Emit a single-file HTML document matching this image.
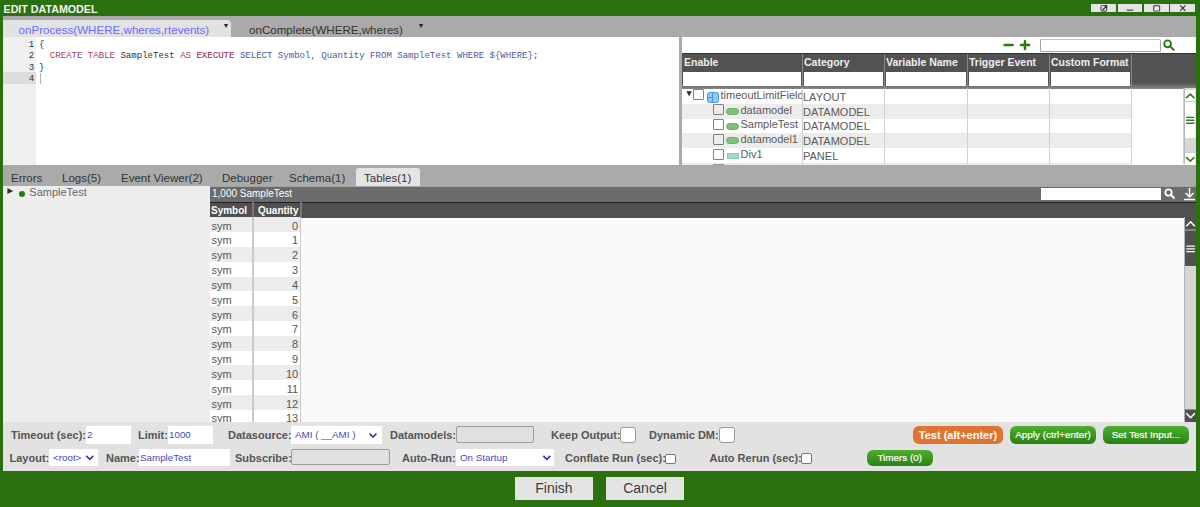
<!DOCTYPE html>
<html><head><meta charset="utf-8">
<style>
*{box-sizing:border-box;margin:0;padding:0}
html,body{width:1200px;height:507px;overflow:hidden;background:#2b700f;font-family:"Liberation Sans",sans-serif}
.a{position:absolute}
.t{position:absolute;white-space:nowrap;line-height:1}
#title{left:3.5px;top:3.6px;color:#f4f4f4;font-weight:bold;font-size:10.7px}
.wb{position:absolute;top:4px;width:24px;height:8px;background:#e4e4e4}
/* top tab bar */
#tabbar{left:3px;top:16px;width:1193px;height:21px;background:#aaaaaa}
#tab1{left:3px;top:20px;width:228px;height:17px;background:#e2e2e2;border-top-right-radius:4px}
/* editor */
#editor{left:3px;top:37px;width:676px;height:128px;background:#fff}
#gutter{left:3px;top:37px;width:33px;height:128px;background:#f0f0f0}
.ln{position:absolute;width:33px;text-align:right;padding-right:2px;font-family:"Liberation Mono",monospace;font-size:9.9px;color:#333;line-height:11.5px;transform:scaleX(0.9158);transform-origin:100% 0}
.code{position:absolute;left:39.2px;font-family:"Liberation Mono",monospace;font-size:9.9px;line-height:11.5px;white-space:pre;color:#333;transform:scaleX(0.9158);transform-origin:0 0}
.kw{color:#a0406a}.kb{color:#9a3060;-webkit-text-stroke:0.12px #9a3060}.id{color:#4a5aa0}
#divider{left:679px;top:37px;width:3px;height:128px;background:#aaaaaa}
/* right panel */
#rp{left:682px;top:37px;width:514px;height:128px;background:#fff}
#hdr{left:682px;top:53px;width:514px;height:36px;background:linear-gradient(#333 0,#333 1.5px,#525252 1.5px,#525252 30px,#8a8a8a 36px)}
.hc{position:absolute;top:53px;height:19px;color:#eee;font-weight:bold;font-size:10.5px;line-height:19px;padding-left:2px}
.hin{position:absolute;top:72px;height:14px;background:#fff}
.row{position:absolute;left:682px;width:502px;height:14.75px}
.ct{position:absolute;font-size:11px;color:#5a5a5a;line-height:1;white-space:nowrap}
.cb{position:absolute;width:11px;height:11px;border:1px solid #808080;background:transparent;border-radius:1px}
.pill{position:absolute;width:12.8px;height:7px;border-radius:3.5px;background:#7cc278;border:1px solid #66b262}
.vsep{position:absolute;width:1px;background:#cfcfcf}
/* bottom */
#btabbar{left:3px;top:165px;width:1193px;height:21px;background:#aaaaaa}
.bt{position:absolute;top:173.3px;font-size:11.5px;color:#333;line-height:1;white-space:nowrap}
#btab{left:356px;top:168px;width:64px;height:18px;background:#e4e4e4;border-radius:3px 3px 0 0}
#ltree{left:3px;top:186px;width:207px;height:236px;background:#eeeeee}
#tarea{left:210px;top:186px;width:986px;height:236px;background:linear-gradient(#a4a4a4 0,#a4a4a4 1px,#fafafa 1px)}
#ttitle{left:210px;top:187px;width:986px;height:15px;background:#6b6b6b}
#thdr{left:210px;top:202px;width:986px;height:16px;background:#505050;border-top:1px solid #222}
.drow{position:absolute;left:210px;width:90px;height:14.8px;font-size:11px;color:#555}
#form{left:3px;top:422px;width:1193px;height:49px;background:#e2e2e2}
.lbl{position:absolute;font-weight:bold;font-size:11px;color:#555;line-height:1;white-space:nowrap}
.inp{position:absolute;background:#fff;height:18px}
.val{position:absolute;font-size:9.8px;color:#4848b8;line-height:1;white-space:nowrap}
.btn{position:absolute;border-radius:6px;color:#fff;font-size:9.9px;line-height:1;text-align:center;white-space:nowrap}
.gbtn{background:linear-gradient(#4db02c,#2a8014);-webkit-text-stroke:0.2px #fff}
.fbtn{position:absolute;top:477.3px;width:78px;height:23px;background:#e4e4e4;color:#3c3c3c;font-size:14px;text-align:center;line-height:23px}
</style></head><body>
<div class="t" id="title">EDIT DATAMODEL</div>
<div class="wb" style="left:1091px;width:25px"></div>
<div class="wb" style="left:1118px"></div>
<div class="wb" style="left:1144px;width:25px"></div>
<div class="wb" style="left:1170px;width:25px"></div>
<svg class="a" style="left:1088px;top:0" width="112" height="16" viewBox="0 0 112 16">
<rect x="13" y="5.5" width="5.6" height="5.6" rx="1.3" fill="none" stroke="#5a5a5a" stroke-width="1.2"/>
<path d="M15.6 4.9h3.6v3.6Z" fill="#333"/>
<path d="M14.6 10l3.8-3.8" fill="none" stroke="#333" stroke-width="1.3"/>
<path d="M38.8 10.2h6.6" stroke="#444" stroke-width="1.2"/>
<rect x="65.6" y="5.6" width="6" height="5.4" rx="1" fill="none" stroke="#555" stroke-width="1.2"/>
<path d="M92.2 5.4l5.2 5.4M97.4 5.4l-5.2 5.4" stroke="#333" stroke-width="1.2"/>
</svg>

<div class="a" id="tabbar"></div>
<div class="a" id="tab1"></div>
<div class="t" style="left:18.5px;top:24px;font-size:11.6px;color:#6a6aff">onProcess(WHERE,wheres,rtevents)</div>
<div class="t" style="left:222.5px;top:22px;font-size:7px;color:#222">&#9660;</div>
<div class="t" style="left:249px;top:24px;font-size:11.6px;color:#333">onComplete(WHERE,wheres)</div>
<div class="t" style="left:417.5px;top:22px;font-size:7px;color:#222">&#9660;</div>

<div class="a" id="editor"></div>
<div class="a" id="gutter"></div>
<div class="a" style="left:3px;top:72px;width:33px;height:11.5px;background:#dcdcdc"></div>
<div class="ln" style="left:3px;top:38.5px">1</div>
<div class="ln" style="left:3px;top:50px">2</div>
<div class="ln" style="left:3px;top:61.5px">3</div>
<div class="ln" style="left:3px;top:73px">4</div>
<div class="code" style="top:38.5px">{</div>
<div class="code" style="top:50px">  <span class="kw">CREATE</span> <span class="kw">TABLE</span> SampleTest <span class="kw">AS</span> <span class="kb">EXECUTE</span> <span class="id">SELECT Symbol, Quantity FROM SampleTest WHERE ${WHERE}</span>;</div>
<div class="code" style="top:61.5px">}</div>
<div class="a" style="left:40px;top:73px;width:1px;height:10.5px;background:#b0b0b0"></div>

<div class="a" id="divider"></div>
<div class="a" id="rp"></div>

<!-- right panel -->
<svg class="a" style="left:990px;top:34px" width="50" height="22" viewBox="0 0 50 22"><path d="M14.6 11h8M31 11h8.2M35 7.4v7.6" fill="none" stroke="#2a7a12" stroke-width="2.6" stroke-linecap="round"/></svg>
<div class="a" style="left:1039.7px;top:39px;width:121.5px;height:12.7px;background:#fff;border:1px solid;border-color:#c4c4c4 #a4a4a4 #a4a4a4 #a4a4a4;border-radius:1.5px"></div>
<svg class="a" style="left:1160px;top:36px" width="20" height="20" viewBox="0 0 20 20"><circle cx="7.6" cy="7.8" r="3.4" fill="none" stroke="#2a7a12" stroke-width="1.9"/><line x1="10.2" y1="10.4" x2="13.6" y2="13.8" stroke="#2a7a12" stroke-width="2" stroke-linecap="round"/></svg>
<div class="a" id="hdr"></div>

<div class="hc" style="left:682px">Enable</div>
<div class="hc" style="left:802px">Category</div>
<div class="hc" style="left:884px">Variable Name</div>
<div class="hc" style="left:967px">Trigger Event</div>
<div class="hc" style="left:1049px">Custom Format</div>
<div class="a" style="left:802px;top:54px;width:1px;height:34px;background:#888"></div>
<div class="a" style="left:884px;top:54px;width:1px;height:34px;background:#888"></div>
<div class="a" style="left:967px;top:54px;width:1px;height:34px;background:#888"></div>
<div class="a" style="left:1049px;top:54px;width:1px;height:34px;background:#888"></div>
<div class="a" style="left:1131px;top:54px;width:1px;height:34px;background:#888"></div>
<div class="hin" style="left:683px;width:118px"></div>
<div class="hin" style="left:804px;width:79px"></div>
<div class="hin" style="left:886px;width:80px"></div>
<div class="hin" style="left:969px;width:79px"></div>
<div class="hin" style="left:1051px;width:79px"></div>
<div class="a" style="left:682px;top:89px;width:502px;height:75px;background:#fff"></div>
<div class="a" style="left:682px;top:104px;width:449px;height:14.5px;background:#ececec"></div>
<div class="a" style="left:682px;top:133px;width:449px;height:15px;background:#ececec"></div>
<div class="a" style="left:682px;top:163px;width:449px;height:2px;background:#ececec"></div>
<div class="a" style="left:713px;top:164px;width:11px;height:1px;background:#999"></div>
<div class="vsep" style="left:802px;top:88px;height:76px"></div>
<div class="vsep" style="left:884px;top:88px;height:76px"></div>
<div class="vsep" style="left:967px;top:88px;height:76px"></div>
<div class="vsep" style="left:1049px;top:88px;height:76px"></div>
<div class="vsep" style="left:1131px;top:88px;height:76px"></div>
<svg class="a" style="left:680px;top:86px" width="20" height="20"><path d="M6.4 5.3h5.4l-2.7 5Z" fill="#2a2a2a"/></svg>
<div class="cb" style="left:693px;top:89.4px"></div>
<div class="a" style="left:706.5px;top:91.5px;width:12.5px;height:11px;border-radius:2.5px;background:#8ccaf2;border:1px solid #4a94e0"></div><div class="a" style="left:712.2px;top:92px;width:1px;height:10px;background:#4a94e0"></div><div class="a" style="left:707px;top:96.5px;width:5.5px;height:1px;background:#4a94e0"></div>
<div class="ct" style="left:720.5px;top:90.3px;width:81.5px;overflow:hidden">timeoutLimitField</div>
<div class="cb" style="left:713px;top:104.3px"></div><div class="pill" style="left:726.2px;top:107.8px"></div>
<div class="ct" style="left:740.5px;top:104.6px">datamodel</div>
<div class="cb" style="left:713px;top:119px"></div><div class="pill" style="left:726.2px;top:122.5px"></div>
<div class="ct" style="left:740.5px;top:119.3px">SampleTest</div>
<div class="cb" style="left:713px;top:133.8px"></div><div class="pill" style="left:726.2px;top:137.3px"></div>
<div class="ct" style="left:740.5px;top:134px">datamodel1</div>
<div class="cb" style="left:713px;top:148.5px"></div><div class="a" style="left:726.5px;top:152.7px;width:12.5px;height:6.8px;background:#a6d6c6;border:1px solid #92c8b6"></div>
<div class="ct" style="left:740.5px;top:148.8px">Div1</div>
<div class="ct" style="left:803px;top:92px">LAYOUT</div>
<div class="ct" style="left:803px;top:106.5px">DATAMODEL</div>
<div class="ct" style="left:803px;top:121px">DATAMODEL</div>
<div class="ct" style="left:803px;top:135.7px">DATAMODEL</div>
<div class="ct" style="left:803px;top:150.5px">PANEL</div>
<!-- tree scrollbar -->
<svg class="a" style="left:0;top:0" width="1200" height="170" viewBox="0 0 1200 170">
<rect x="1183.5" y="88" width="12.5" height="76" fill="#d8d8d8"/>
<rect x="1183.5" y="88" width="1.5" height="76" fill="#b8b8b8"/>
<rect x="1185" y="90" width="10.5" height="11.2" fill="#fff"/>
<rect x="1185" y="102" width="10.5" height="36" fill="#fff"/>
<rect x="1185" y="101.2" width="10.5" height="0.8" fill="#c8c8c8"/>
<rect x="1185" y="152.8" width="10.5" height="11.2" fill="#fff"/>
<rect x="1185" y="152" width="10.5" height="0.8" fill="#c8c8c8"/>
<path d="M1186 98.2L1190.2 94.2L1194.4 98.2" fill="none" stroke="#2e7d1a" stroke-width="1.6"/>
<path d="M1186 157.2L1190.2 161.2L1194.4 157.2" fill="none" stroke="#2e7d1a" stroke-width="1.6"/>
<path d="M1186 117.4h8.4M1186 120.3h8.4M1186 123.2h8.4" stroke="#2e7d1a" stroke-width="1.4"/>
</svg>
<!-- bottom tabs -->
<div class="a" id="btabbar"></div>
<div class="a" id="btab"></div>
<div class="bt" style="left:11px">Errors</div>
<div class="bt" style="left:62px">Logs(5)</div>
<div class="bt" style="left:121px">Event Viewer(2)</div>
<div class="bt" style="left:222px">Debugger</div>
<div class="bt" style="left:289px">Schema(1)</div>
<div class="bt" style="left:364px">Tables(1)</div>
<div class="a" id="ltree"></div>
<svg class="a" style="left:0;top:180px" width="20" height="20"><path d="M7.4 8.1L13.3 11L7.4 14Z" fill="#333"/></svg>
<div class="a" style="left:18.7px;top:190.7px;width:6.2px;height:6.2px;border-radius:50%;background:#2a7a12"></div>
<div class="ct" style="left:29.3px;top:187.3px;color:#666">SampleTest</div>
<div class="a" id="tarea"></div>
<div class="a" id="ttitle"></div>
<div class="t" style="left:212px;top:188.7px;font-size:10px;color:#fff">1,000 SampleTest</div>
<div class="a" id="thdr"></div>
<div class="t" style="left:211px;top:205.8px;font-size:10px;color:#fff;font-weight:bold">Symbol</div>
<div class="t" style="left:248px;top:205.8px;width:50.5px;text-align:right;font-size:10px;color:#fff;font-weight:bold">Quantity</div>
<div class="a" style="left:1041px;top:188px;width:120px;height:12px;background:#fff"></div>

<div class="a" style="left:210px;top:217.2px;width:974px;height:204.8px;overflow:hidden">
<div class="a" style="left:0;top:0.00px;width:90px;height:14.83px;background:#ececec"></div>
<div class="t" style="left:1.4px;top:3.40px;font-size:11px;color:#555">sym</div>
<div class="t" style="left:43px;top:3.40px;width:45.2px;text-align:right;font-size:11px;color:#555">0</div>
<div class="a" style="left:0;top:14.83px;width:90px;height:14.83px;background:#ffffff"></div>
<div class="t" style="left:1.4px;top:18.23px;font-size:11px;color:#555">sym</div>
<div class="t" style="left:43px;top:18.23px;width:45.2px;text-align:right;font-size:11px;color:#555">1</div>
<div class="a" style="left:0;top:29.66px;width:90px;height:14.83px;background:#ececec"></div>
<div class="t" style="left:1.4px;top:33.06px;font-size:11px;color:#555">sym</div>
<div class="t" style="left:43px;top:33.06px;width:45.2px;text-align:right;font-size:11px;color:#555">2</div>
<div class="a" style="left:0;top:44.49px;width:90px;height:14.83px;background:#ffffff"></div>
<div class="t" style="left:1.4px;top:47.89px;font-size:11px;color:#555">sym</div>
<div class="t" style="left:43px;top:47.89px;width:45.2px;text-align:right;font-size:11px;color:#555">3</div>
<div class="a" style="left:0;top:59.32px;width:90px;height:14.83px;background:#ececec"></div>
<div class="t" style="left:1.4px;top:62.72px;font-size:11px;color:#555">sym</div>
<div class="t" style="left:43px;top:62.72px;width:45.2px;text-align:right;font-size:11px;color:#555">4</div>
<div class="a" style="left:0;top:74.15px;width:90px;height:14.83px;background:#ffffff"></div>
<div class="t" style="left:1.4px;top:77.55px;font-size:11px;color:#555">sym</div>
<div class="t" style="left:43px;top:77.55px;width:45.2px;text-align:right;font-size:11px;color:#555">5</div>
<div class="a" style="left:0;top:88.98px;width:90px;height:14.83px;background:#ececec"></div>
<div class="t" style="left:1.4px;top:92.38px;font-size:11px;color:#555">sym</div>
<div class="t" style="left:43px;top:92.38px;width:45.2px;text-align:right;font-size:11px;color:#555">6</div>
<div class="a" style="left:0;top:103.81px;width:90px;height:14.83px;background:#ffffff"></div>
<div class="t" style="left:1.4px;top:107.21px;font-size:11px;color:#555">sym</div>
<div class="t" style="left:43px;top:107.21px;width:45.2px;text-align:right;font-size:11px;color:#555">7</div>
<div class="a" style="left:0;top:118.64px;width:90px;height:14.83px;background:#ececec"></div>
<div class="t" style="left:1.4px;top:122.04px;font-size:11px;color:#555">sym</div>
<div class="t" style="left:43px;top:122.04px;width:45.2px;text-align:right;font-size:11px;color:#555">8</div>
<div class="a" style="left:0;top:133.47px;width:90px;height:14.83px;background:#ffffff"></div>
<div class="t" style="left:1.4px;top:136.87px;font-size:11px;color:#555">sym</div>
<div class="t" style="left:43px;top:136.87px;width:45.2px;text-align:right;font-size:11px;color:#555">9</div>
<div class="a" style="left:0;top:148.30px;width:90px;height:14.83px;background:#ececec"></div>
<div class="t" style="left:1.4px;top:151.70px;font-size:11px;color:#555">sym</div>
<div class="t" style="left:43px;top:151.70px;width:45.2px;text-align:right;font-size:11px;color:#555">10</div>
<div class="a" style="left:0;top:163.13px;width:90px;height:14.83px;background:#ffffff"></div>
<div class="t" style="left:1.4px;top:166.53px;font-size:11px;color:#555">sym</div>
<div class="t" style="left:43px;top:166.53px;width:45.2px;text-align:right;font-size:11px;color:#555">11</div>
<div class="a" style="left:0;top:177.96px;width:90px;height:14.83px;background:#ececec"></div>
<div class="t" style="left:1.4px;top:181.36px;font-size:11px;color:#555">sym</div>
<div class="t" style="left:43px;top:181.36px;width:45.2px;text-align:right;font-size:11px;color:#555">12</div>
<div class="a" style="left:0;top:192.79px;width:90px;height:14.83px;background:#ffffff"></div>
<div class="t" style="left:1.4px;top:196.19px;font-size:11px;color:#555">sym</div>
<div class="t" style="left:43px;top:196.19px;width:45.2px;text-align:right;font-size:11px;color:#555">13</div>
<div class="a" style="left:42px;top:0;width:2px;height:205px;background:#cacaca"></div>
<div class="a" style="left:90px;top:0;width:1px;height:205px;background:#c8c8c8"></div>
</div>
<div class="a" style="left:252px;top:202.4px;width:2px;height:15px;background:#777"></div>
<div class="a" style="left:300px;top:202.4px;width:2px;height:15px;background:#777"></div>
<!-- table scrollbar -->
<svg class="a" style="left:0;top:0" width="1200" height="430" viewBox="0 0 1200 430">
<rect x="1184" y="217" width="12" height="205" fill="#d6d4d4"/>
<rect x="1184" y="217" width="1" height="205" fill="#b4b4b4"/>
<rect x="1185" y="217" width="11" height="49" fill="#505050"/>
<rect x="1185" y="229.2" width="11" height="1.8" fill="#8a8a8a"/>
<rect x="1185" y="409.5" width="11" height="12.5" fill="#505050"/>
<path d="M1186.3 226.2L1190.6 221.8L1194.9 226.2" fill="none" stroke="#fff" stroke-width="1.6"/>
<path d="M1186.3 413.3L1190.6 417.7L1194.9 413.3" fill="none" stroke="#fff" stroke-width="1.6"/>
<path d="M1186.3 246.1h8.6M1186.3 248.9h8.6M1186.3 251.7h8.6" stroke="#fff" stroke-width="1.3"/>
</svg>
<svg class="a" style="left:1164px;top:188px" width="12" height="12" viewBox="0 0 12 12"><circle cx="4.5" cy="4.5" r="3.2" fill="none" stroke="#fff" stroke-width="1.8"/><line x1="6.8" y1="6.8" x2="10.5" y2="10.5" stroke="#fff" stroke-width="2.2"/></svg>
<svg class="a" style="left:1183px;top:187px" width="13" height="14" viewBox="0 0 13 14"><path d="M6.5 1v9M2.5 6l4 4 4-4" fill="none" stroke="#fff" stroke-width="1.5"/><path d="M1 12.5h11" stroke="#fff" stroke-width="1.5"/></svg>

<!-- form -->
<div class="a" id="form"></div>
<div class="lbl" style="left:11px;top:430.2px">Timeout (sec):</div>
<div class="inp" style="left:86px;top:426px;width:45px"></div><div class="val" style="left:87px;top:429.9px">2</div>
<div class="lbl" style="left:138px;top:430.2px">Limit:</div>
<div class="inp" style="left:168px;top:426px;width:45px"></div><div class="val" style="left:169px;top:429.9px">1000</div>
<div class="lbl" style="left:228px;top:430.2px">Datasource:</div>
<div class="inp" style="left:291px;top:426px;width:91px"></div><div class="val" style="left:295px;top:429.9px">AMI ( __AMI )</div>
<div class="lbl" style="left:390px;top:430.2px">Datamodels:</div>
<div class="inp" style="left:455.5px;top:426px;width:78.5px;height:16.5px;background:#e0e0e0;border:1px solid #9c9c9c;border-radius:2px"></div>
<div class="lbl" style="left:551px;top:430.2px">Keep Output:</div>
<div class="inp" style="left:620px;top:427px;width:16px;height:16px;border-radius:3px;border:1px solid #999"></div>
<div class="lbl" style="left:649px;top:430.2px">Dynamic DM:</div>
<div class="inp" style="left:719px;top:426.5px;width:16px;height:16px;border-radius:3px;border:1px solid #999"></div>
<div class="btn" style="left:913px;top:426px;width:90px;height:17.5px;background:#df7530;font-weight:bold;line-height:18.5px;font-size:11px">Test (alt+enter)</div>
<div class="btn gbtn" style="left:1010px;top:426px;width:86px;height:17.5px;line-height:17.5px">Apply (ctrl+enter)</div>
<div class="btn gbtn" style="left:1103px;top:426px;width:86px;height:17.5px;line-height:17.5px">Set Test Input...</div>

<div class="lbl" style="left:9.5px;top:453.3px">Layout:</div>
<div class="inp" style="left:49px;top:449px;width:49px;height:16.7px"></div><div class="val" style="left:53px;top:452.7px">&lt;root&gt;</div>
<div class="lbl" style="left:106px;top:453.3px">Name:</div>
<div class="inp" style="left:139px;top:449px;width:90.5px;height:16.7px"></div><div class="val" style="left:140px;top:452.7px">SampleTest</div>
<div class="lbl" style="left:235px;top:453.3px">Subscribe:</div>
<div class="inp" style="left:291px;top:449px;width:99px;height:16px;background:#e0e0e0;border:1px solid #9c9c9c;border-radius:2px"></div>
<div class="lbl" style="left:402px;top:453.3px">Auto-Run:</div>
<div class="inp" style="left:456px;top:449px;width:98px;height:16.7px"></div><div class="val" style="left:460px;top:452.7px">On Startup</div>
<div class="lbl" style="left:565px;top:453.3px">Conflate Run (sec):</div>
<div class="inp" style="left:665px;top:453.5px;width:11px;height:10.5px;border:1px solid #777;border-radius:2px"></div>
<div class="lbl" style="left:709.5px;top:453.3px">Auto Rerun (sec):</div>
<div class="inp" style="left:801px;top:453px;width:11px;height:10.5px;border:1px solid #777;border-radius:2px"></div>
<div class="btn gbtn" style="left:867px;top:449.6px;width:65.5px;height:16.5px;line-height:16.5px">Timers (0)</div>
<svg class="a" style="left:0;top:0" width="1200" height="507" viewBox="0 0 1200 507">
<path d="M86.3 455.9l3.5 3.5 3.5-3.5" fill="none" stroke="#3333aa" stroke-width="1.6"/>
<path d="M369.5 433.5l3.5 3.5 3.5-3.5" fill="none" stroke="#3333aa" stroke-width="1.6"/>
<path d="M543.3 455.9l3.5 3.5 3.5-3.5" fill="none" stroke="#3333aa" stroke-width="1.6"/>
</svg>
<div class="fbtn" style="left:515px">Finish</div>
<div class="fbtn" style="left:606px">Cancel</div>
</body></html>
